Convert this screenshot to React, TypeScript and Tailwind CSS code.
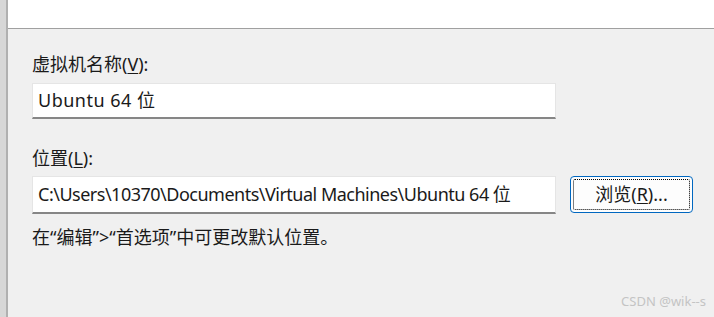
export default function App() {
  const font = { fontFamily: '"Noto Sans", "Noto Sans CJK SC", sans-serif' };
  return (
    <div className="flex h-[317px] w-[714px] overflow-hidden text-[#1a1a1a]" style={font}>
      <div className="w-[6px] bg-[#d7d7d7]" />
      <div className="w-[2px] bg-[#b0b0b0]" />
      <div className="flex flex-1 flex-col">
        <div className="h-[29px] border-b border-[#a0a0a0] bg-white" />
        <div className="relative flex flex-1 flex-col bg-[#f0f0f0] pl-[24px] pt-[24px]">
          <div className="flex h-[22px] items-center text-[18px] leading-[22px]">
            虚拟机名称(<span className="underline underline-offset-2">V</span>):
          </div>
          <div className="mt-[8px] flex h-[36px] w-[524px] items-center border border-b-2 border-[#e5e5e5] border-b-[#868686] bg-white pl-[5px] text-[18px] tracking-[0.5px]">
            Ubuntu 64 位
          </div>
          <div className="mt-[28px] flex h-[22px] items-center text-[18px] leading-[22px]">
            位置(<span className="underline underline-offset-2">L</span>):
          </div>
          <div className="mt-[7px] flex items-start gap-[14px]">
            <div className="flex h-[38px] w-[524px] items-center border border-b-2 border-[#e5e5e5] border-b-[#868686] bg-white pl-[5px] text-[18px] tracking-[-0.5px]">
              C:\Users\10370\Documents\Virtual Machines\Ubuntu 64 位
            </div>
            <div className="flex h-[37px] w-[123px] items-center justify-center rounded-[4px] border border-[#0067c0] bg-[#fdfdfd] p-[2px]">
              <div className="flex h-full w-full items-center justify-center rounded-[2px] border border-dotted border-black text-[18px]">
                浏览(<span className="underline underline-offset-2">R</span>)...
              </div>
            </div>
          </div>
          <div className="mt-[12px] flex h-[22px] items-center text-[18px] leading-[22px]">
            在“编辑”&gt;“首选项”中可更改默认位置。
          </div>
          <div className="absolute bottom-[6px] right-[8px] text-[13px] text-[#c4c4c4]">CSDN @wik--s</div>
        </div>
      </div>
    </div>
  );
}
